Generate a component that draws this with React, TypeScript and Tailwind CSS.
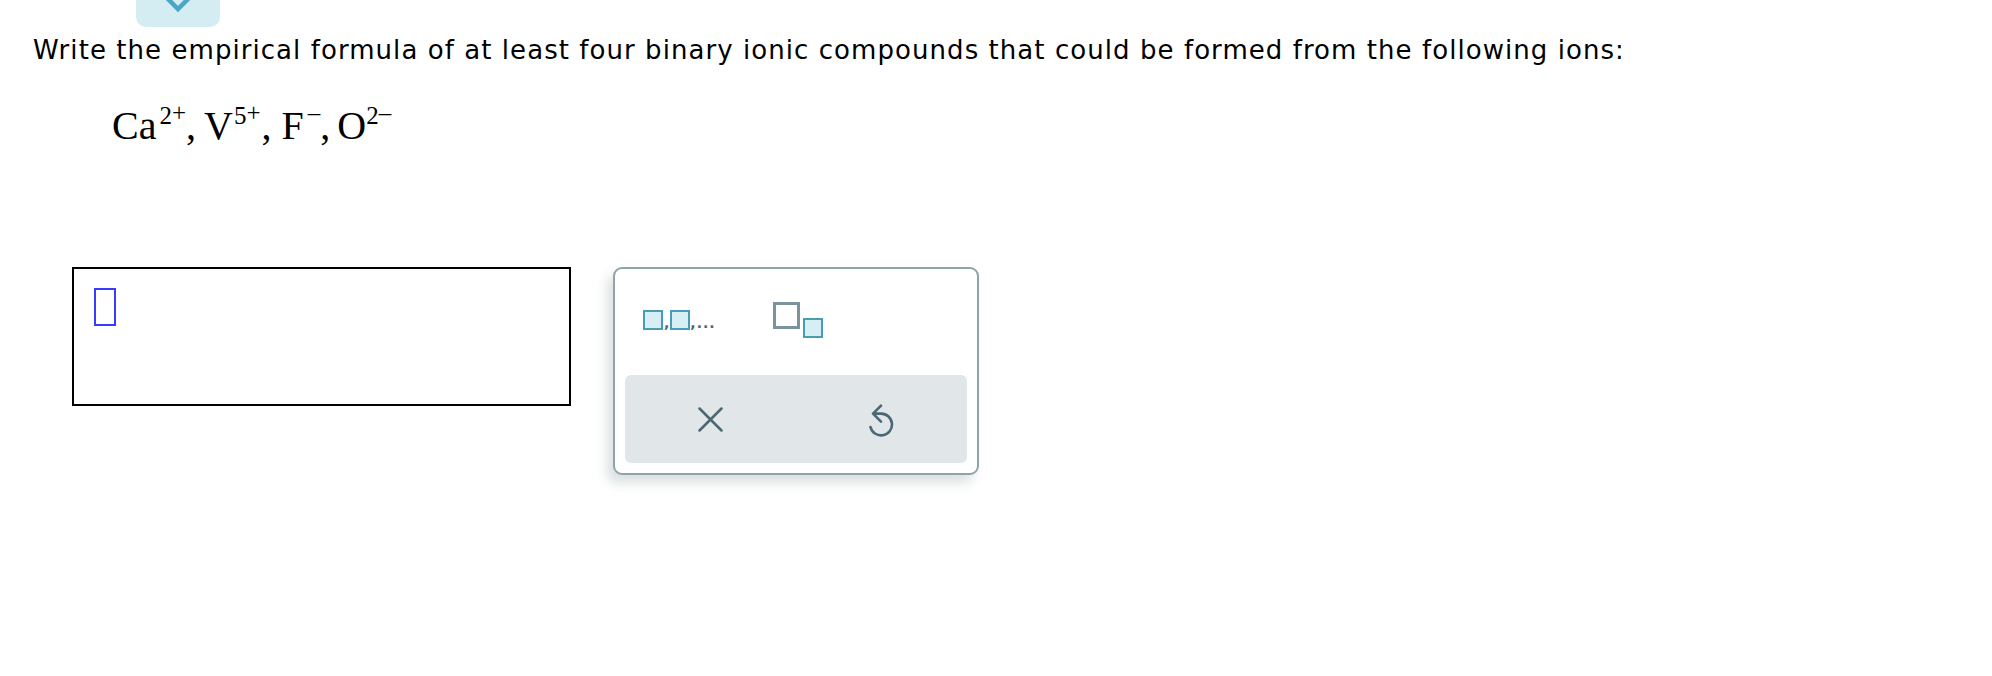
import React from "react";

const SLATE = "#4a6772";

function Sup({ children, className = "" }: { children: React.ReactNode; className?: string }) {
  // raised charge, sits over the baseline without pushing the line
  return <span className={"relative -top-[15px] text-[25px] leading-none " + className}>{children}</span>;
}

// the sign of a charge rides a little above the digit
function Sign({ children }: { children: React.ReactNode }) {
  return <span className="relative -top-[3px]">{children}</span>;
}

function Slot({ className = "" }: { className?: string }) {
  return <span className={"block h-[20px] w-[20px] border-[2.5px] border-[#4a9cb5] bg-[#d6eef4] " + className} />;
}

export default function App() {
  return (
    <div className="min-h-screen bg-white font-['DejaVu_Sans',sans-serif] text-black">
      <div className="ml-[136px] flex h-[27px] w-[84px] justify-center rounded-b-[10px] bg-[#d4edf3]">
        <svg width="30" height="14" viewBox="0 0 30 14" fill="none">
          <polyline points="3,-3 15,9 27,-3" stroke="#4ba6c6" strokeWidth="4.5" />
        </svg>
      </div>

      <p className="ml-[33px] mt-[7px] text-[26px] leading-[32px] tracking-[1.06px]">
        Write the empirical formula of at least four binary ionic compounds that could be formed from the following ions:
      </p>

      <div className="ml-[112px] mt-[36px] flex h-[48px] items-baseline font-['Liberation_Serif',serif] text-[40px] leading-[48px]">
        <span>Ca</span>
        <Sup className="ml-[3px]">2<Sign>+</Sign></Sup>
        <span>,</span>
        <span className="ml-[8px]">V</span>
        <Sup className="ml-[1px]">5<Sign>+</Sign></Sup>
        <span className="ml-[1px]">,</span>
        <span className="ml-[10px]">F</span>
        <Sup className="ml-[4px]"><Sign>–</Sign></Sup>
        <span>,</span>
        <span className="ml-[7px]">O</span>
        <Sup>2<Sign>–</Sign></Sup>
      </div>

      <div className="ml-[72px] mt-[117px] flex items-start gap-[42px]">
        <div className="h-[139px] w-[499px] border-2 border-black pl-[20px] pt-[19px]">
          <div className="h-[38px] w-[22px] border-2 border-[#3b3bff]" />
        </div>

        <div className="flex h-[208px] w-[366px] flex-col rounded-[9px] border-2 border-[#8fa3ac] bg-white p-[10px] shadow-[-6px_8px_12px_rgba(40,60,70,0.16)]">
          <div className="flex h-[96px] items-start pl-[18px] pt-[23px]">
            <div className="mt-[8px] flex w-[130px] items-end">
              <Slot />
              <span className="mx-[1px] text-[14px] font-bold leading-none" style={{ color: SLATE }}>,</span>
              <Slot />
              <span className="text-[14px] font-bold leading-none tracking-[1px] text-[#4a6772]">,...</span>
            </div>
            <div className="flex items-start">
              <span className="block h-[27px] w-[27px] border-[3px] border-[#7b939c]" />
              <Slot className="ml-[3px] mt-[16px]" />
            </div>
          </div>

          <div className="grid h-[88px] grid-cols-2 place-items-center rounded-[6px] bg-[#e1e6e9]">
            <svg width="25" height="25" viewBox="0 0 25 25" fill="none" stroke="#4a6772" strokeWidth="2.5" strokeLinecap="round">
              <path d="M1.5 1.5 L23.5 23.5 M23.5 1.5 L1.5 23.5" />
            </svg>
            <svg width="28" height="36" viewBox="0 0 28 36" fill="none" stroke="#4a6772" strokeWidth="2.6" strokeLinecap="round" strokeLinejoin="round">
              <path d="M13 4.6 L5 12.6 L13 20.6 M5 12.6 H13.1 A10.9 10.9 0 1 1 2.48 25.95" />
            </svg>
          </div>
        </div>
      </div>
    </div>
  );
}
